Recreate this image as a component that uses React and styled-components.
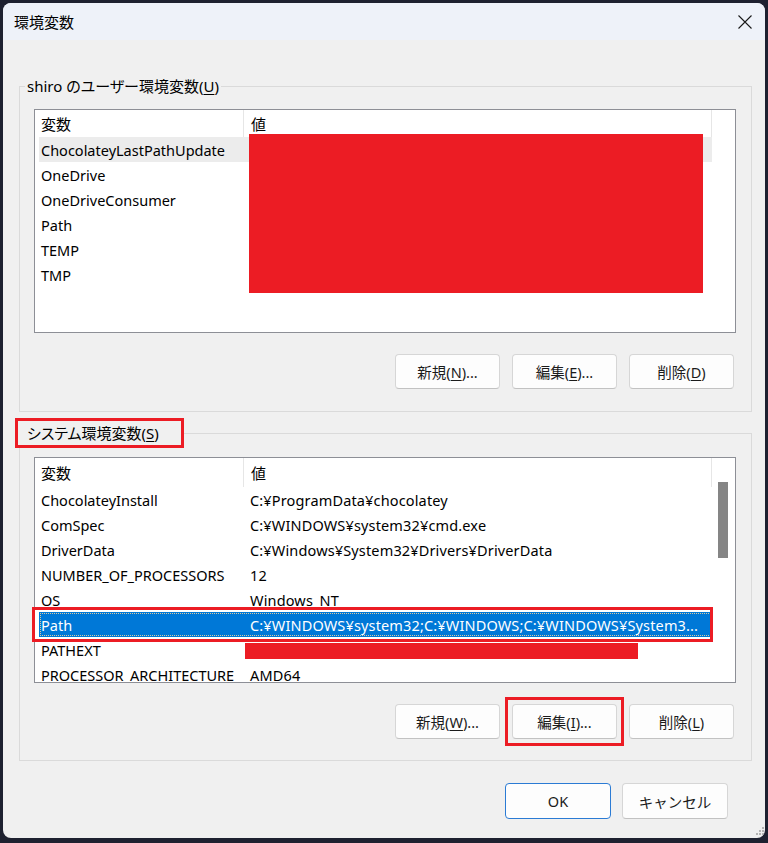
import React from "react";
import styled, { createGlobalStyle, css } from "styled-components";

const GlobalStyle = createGlobalStyle`
  html, body { margin: 0; padding: 0; background: #1e2130; }
  body {
    font-family: "Noto Sans", "Noto Sans CJK JP", sans-serif;
    color: #000;
  }
  #root { padding: 3px 0 0 3px; }
`;

const RED = "#ec1c24";

const Window = styled.div`
  position: relative;
  width: 762px;
  height: 835px;
  background: #f0f0f0;
  border-radius: 8px;
  overflow: hidden;
  display: flex;
  flex-direction: column;
`;

const TitleBar = styled.div`
  height: 37px;
  flex: none;
  background: #eef2f9;
  display: flex;
  align-items: center;
  justify-content: space-between;
  padding: 0 13px 0 11px;
  font-size: 15px;
  font-family: "Noto Sans CJK JP", sans-serif;
`;

const CloseButton = styled.button`
  border: 0;
  background: transparent;
  padding: 0;
  width: 14px;
  height: 14px;
  display: flex;
  color: #1a1a1a;
`;

const Body = styled.div`
  flex: 1;
  display: flex;
  flex-direction: column;
  padding: 36px 13px 0 16px;
`;

const Group = styled.fieldset`
  margin: ${(p) => p.$mt || 0}px 0 0 0;
  padding: 0;
  min-width: 0;
  border: 1px solid #dadada;
`;

const Legend = styled.legend`
  font-size: 15px;
  line-height: 20px;
  font-feature-settings: "palt";
  margin-left: 5px;
  padding: 0 2px;
  ${(p) =>
    p.$marked &&
    css`
      margin-left: -5px;
      border: 3px solid ${RED};
      padding: 2px 22px 2px 9px;
    `}
`;

const Key = styled.span`
  text-decoration: underline;
  text-underline-offset: 2px;
`;

const GroupInner = styled.div`
  padding: ${(p) => p.$pt}px 15px ${(p) => p.$pb}px 14px;
  display: flex;
  flex-direction: column;
`;

const ListBox = styled.div`
  position: relative;
  height: ${(p) => p.$h}px;
  box-sizing: border-box;
  border: 1px solid #8d8f96;
  background: #fff;
  display: flex;
`;

const ListMain = styled.div`
  flex: 1;
  overflow: hidden;
  padding-left: 4px;
  font-size: 14.5px;
`;

const Cols = css`
  display: grid;
  grid-template-columns: 205px 1fr;
`;

const Header = styled.div`
  ${Cols};
  height: ${(p) => p.$h}px;
  align-items: stretch;
  font-family: "Noto Sans CJK JP", sans-serif;
  font-size: 15px;
`;

const HeadCell = styled.div`
  display: flex;
  align-items: center;
  padding-left: ${(p) => (p.$first ? 2 : 7)}px;
  border-right: 1px solid #e6e6e6;
`;

const Row = styled.div`
  ${Cols};
  height: 25px;
  line-height: 26px;
  white-space: nowrap;
  background: ${(p) => (p.$selected ? "#0078d7" : p.$hover ? "#ececec" : "transparent")};
  color: ${(p) => (p.$selected ? "#fff" : "#000")};
  ${(p) =>
    p.$selected &&
    css`
      outline: 1px dotted rgba(255, 214, 150, 0.85);
      outline-offset: -2px;
    `}
`;

const Cell = styled.div`
  overflow: hidden;
  padding-left: ${(p) => (p.$first ? 2 : 6)}px;
  letter-spacing: ${(p) => (p.$first ? 0 : 0.15)}px;
`;

const ScrollTrack = styled.div`
  width: 23px;
  flex: none;
  background: #fff;
`;

const ScrollThumb = styled.div`
  margin: 24px 0 0 6px;
  width: 10px;
  height: 76px;
  background: #858585;
`;

const Redact = styled.div`
  position: absolute;
  background: ${RED};
`;

const Mark = styled.div`
  position: absolute;
  box-sizing: border-box;
  border: 3px solid ${RED};
  pointer-events: none;
`;

const ButtonRow = styled.div`
  display: flex;
  justify-content: flex-end;
  gap: ${(p) => p.$gap || 12}px;
  margin-top: ${(p) => p.$mt}px;
  padding-right: ${(p) => p.$pr || 0}px;
`;

const Button = styled.button`
  position: relative;
  width: ${(p) => (p.$big ? 106 : 105)}px;
  height: ${(p) => (p.$big ? 36 : 35)}px;
  box-sizing: border-box;
  background: #fdfdfd;
  border: 1px solid #d6d6d6;
  border-bottom-color: #c2c2c2;
  border-radius: 4px;
  font-family: "Noto Sans", "Noto Sans CJK JP", sans-serif;
  font-size: 14.5px;
  color: #1b1b1b;
  padding: 0;
  ${(p) =>
    p.$default &&
    css`
      border: 1px solid #2b7bd4;
    `}
  ${(p) =>
    p.$marked &&
    css`
      &::after {
        content: "";
        position: absolute;
        inset: -8px;
        border: 3px solid ${RED};
        pointer-events: none;
      }
    `}
`;

const Grip = styled.svg`
  position: absolute;
  right: 1px;
  bottom: 2px;
`;

const userVars = [
  "ChocolateyLastPathUpdate",
  "OneDrive",
  "OneDriveConsumer",
  "Path",
  "TEMP",
  "TMP",
];

const sysVars = [
  ["ChocolateyInstall", "C:¥ProgramData¥chocolatey"],
  ["ComSpec", "C:¥WINDOWS¥system32¥cmd.exe"],
  ["DriverData", "C:¥Windows¥System32¥Drivers¥DriverData"],
  ["NUMBER_OF_PROCESSORS", "12"],
  ["OS", "Windows_NT"],
  ["Path", "C:¥WINDOWS¥system32;C:¥WINDOWS;C:¥WINDOWS¥System3..."],
  ["PATHEXT", ""],
  ["PROCESSOR_ARCHITECTURE", "AMD64"],
];

function ListHeader({ h }) {
  return (
    <Header $h={h}>
      <HeadCell $first>変数</HeadCell>
      <HeadCell>値</HeadCell>
    </Header>
  );
}

export default function App() {
  return (
    <>
      <GlobalStyle />
      <Window>
        <TitleBar>
          <span>環境変数</span>
          <CloseButton aria-label="閉じる">
            <svg width="14" height="14" viewBox="0 0 14 14">
              <path d="M0.5 0.5 L13.5 13.5 M13.5 0.5 L0.5 13.5" stroke="currentColor" strokeWidth="1.1" fill="none" />
            </svg>
          </CloseButton>
        </TitleBar>
        <Body>
          <Group>
            <Legend>
              shiro のユーザー環境変数(<Key>U</Key>)
            </Legend>
            <GroupInner $pt={13} $pb={22}>
              <ListBox $h={224}>
                <ListMain>
                  <ListHeader h={27} />
                  {userVars.map((v, i) => (
                    <Row key={v} $hover={i === 0}>
                      <Cell $first>{v}</Cell>
                      <Cell />
                    </Row>
                  ))}
                </ListMain>
                <ScrollTrack />
                <Redact style={{ left: 214, top: 24, width: 454, height: 159 }} />
              </ListBox>
              <ButtonRow $mt={21} $pr={2}>
                <Button>新規(<Key>N</Key>)...</Button>
                <Button>編集(<Key>E</Key>)...</Button>
                <Button>削除(<Key>D</Key>)</Button>
              </ButtonRow>
            </GroupInner>
          </Group>
          <Group $mt={6}>
            <Legend $marked>
              システム環境変数(<Key>S</Key>)
            </Legend>
            <GroupInner $pt={9} $pb={21}>
              <ListBox $h={226}>
                <ListMain>
                  <ListHeader h={29} />
                  {sysVars.map(([k, v]) => (
                    <Row key={k} $selected={k === "Path"}>
                      <Cell $first>{k}</Cell>
                      <Cell>{v}</Cell>
                    </Row>
                  ))}
                </ListMain>
                <ScrollTrack>
                  <ScrollThumb />
                </ScrollTrack>
                <Redact style={{ left: 210, top: 185, width: 393, height: 16 }} />
                <Mark style={{ left: -3, top: 149, width: 681, height: 35 }} />
              </ListBox>
              <ButtonRow $mt={21} $pr={2}>
                <Button>新規(<Key>W</Key>)...</Button>
                <Button $marked>編集(<Key>I</Key>)...</Button>
                <Button>削除(<Key>L</Key>)</Button>
              </ButtonRow>
            </GroupInner>
          </Group>
          <ButtonRow $mt={22} $pr={24} $gap={11}>
            <Button $big $default>OK</Button>
            <Button $big>キャンセル</Button>
          </ButtonRow>
        </Body>
        <Grip width="10" height="10" viewBox="0 0 10 10">
          {[
            [8, 0],
            [8, 3],
            [5, 3],
            [8, 6],
            [5, 6],
            [2, 6],
          ].map(([x, y]) => (
            <rect key={`${x}-${y}`} x={x} y={y + 1} width="2" height="2" fill="#b4b4b4" />
          ))}
        </Grip>
      </Window>
    </>
  );
}
